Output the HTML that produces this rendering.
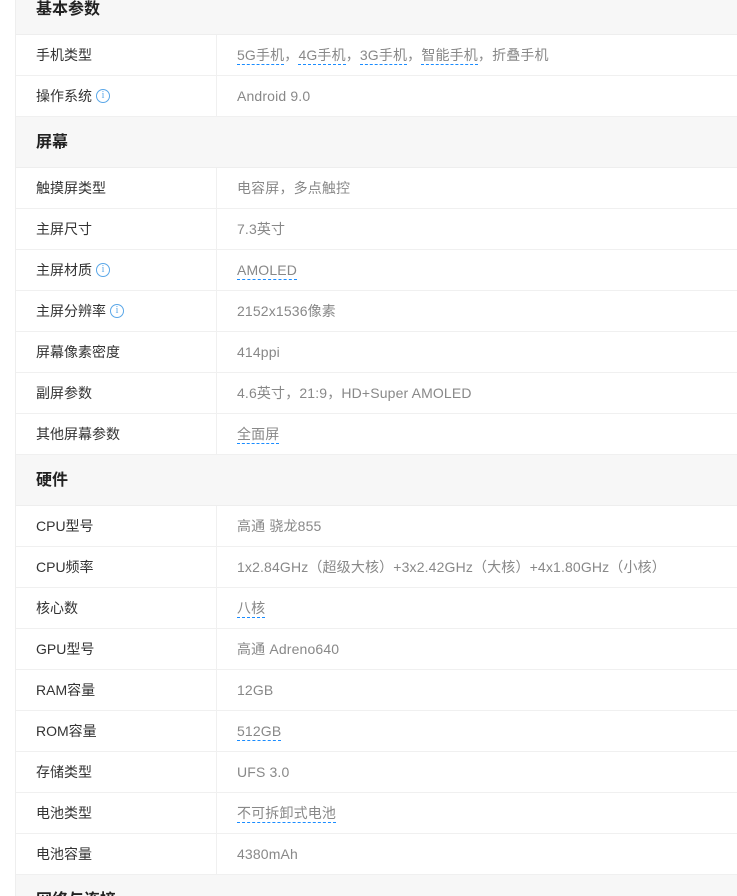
<!DOCTYPE html>
<html style="height:896px;overflow:hidden"><head><meta charset="utf-8"><style>
*{margin:0;padding:0;box-sizing:border-box}
html,body{width:737px;height:896px;overflow:hidden}
body{position:relative;background:#fff;font-family:"Liberation Sans","Noto Sans CJK SC",sans-serif;font-size:14px;color:#333}
.wrap{position:absolute;left:15px;top:-16px;width:760px;border-left:1px solid #eee}
.h{height:51px;background:#f7f7f7;font-weight:bold;font-size:16px;line-height:51px;padding-left:20px;color:#222;border-bottom:1px solid #eee}
.r{height:41px;display:flex;border-bottom:1px solid #f0f0f0;line-height:40px}
.l{width:201px;padding-left:20px;border-right:1px solid #f0f0f0;flex:none;color:#333}
.v{padding-left:20px;color:#888;letter-spacing:0.15px}
.u{border-bottom:1px dashed #1a8cff;line-height:18px;display:inline-block}
.i{display:inline-block;width:14px;height:14px;border:1px solid #5aa7e8;border-radius:50%;color:#5aa7e8;font-size:10px;line-height:12px;text-align:center;vertical-align:middle;margin-left:4px;margin-top:-3px;font-family:"Liberation Serif",serif}
</style></head><body><div class="wrap">
<div class="h">基本参数</div>
<div class="r"><div class="l">手机类型</div><div class="v"><span class="u">5G手机</span>，<span class="u">4G手机</span>，<span class="u">3G手机</span>，<span class="u">智能手机</span>，折叠手机</div></div>
<div class="r"><div class="l">操作系统<span class="i">i</span></div><div class="v">Android 9.0</div></div>
<div class="h">屏幕</div>
<div class="r"><div class="l">触摸屏类型</div><div class="v">电容屏，多点触控</div></div>
<div class="r"><div class="l">主屏尺寸</div><div class="v">7.3英寸</div></div>
<div class="r"><div class="l">主屏材质<span class="i">i</span></div><div class="v"><span class="u">AMOLED</span></div></div>
<div class="r"><div class="l">主屏分辨率<span class="i">i</span></div><div class="v">2152x1536像素</div></div>
<div class="r"><div class="l">屏幕像素密度</div><div class="v">414ppi</div></div>
<div class="r"><div class="l">副屏参数</div><div class="v">4.6英寸，21:9，HD+Super AMOLED</div></div>
<div class="r"><div class="l">其他屏幕参数</div><div class="v"><span class="u">全面屏</span></div></div>
<div class="h">硬件</div>
<div class="r"><div class="l">CPU型号</div><div class="v">高通 骁龙855</div></div>
<div class="r"><div class="l">CPU频率</div><div class="v">1x2.84GHz（超级大核）+3x2.42GHz（大核）+4x1.80GHz（小核）</div></div>
<div class="r"><div class="l">核心数</div><div class="v"><span class="u">八核</span></div></div>
<div class="r"><div class="l">GPU型号</div><div class="v">高通 Adreno640</div></div>
<div class="r"><div class="l">RAM容量</div><div class="v">12GB</div></div>
<div class="r"><div class="l">ROM容量</div><div class="v"><span class="u">512GB</span></div></div>
<div class="r"><div class="l">存储类型</div><div class="v">UFS 3.0</div></div>
<div class="r"><div class="l">电池类型</div><div class="v"><span class="u">不可拆卸式电池</span></div></div>
<div class="r"><div class="l">电池容量</div><div class="v">4380mAh</div></div>
<div class="h">网络与连接</div>
</div></body></html>
